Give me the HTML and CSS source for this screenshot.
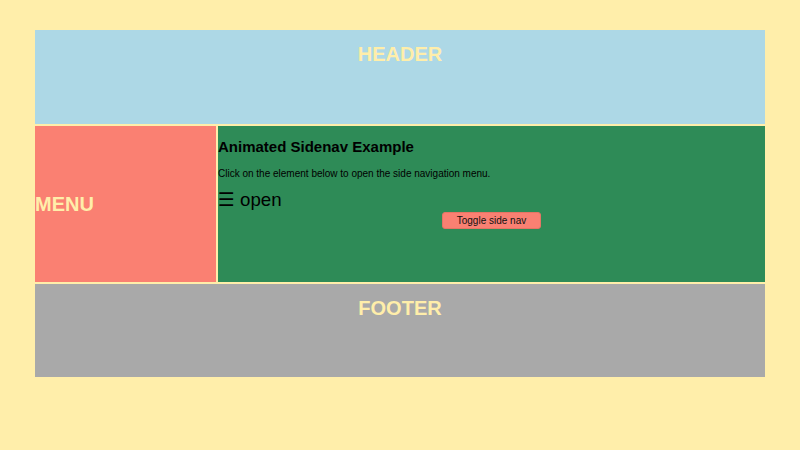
FILE: index.html
```html
<!DOCTYPE html>
<html>
<head>
<meta charset="utf-8">
<link rel="stylesheet" href="styles.css">
</head>
<body>
<div class="layout">
  <header class="header"><h1 class="title">HEADER</h1></header>
  <nav class="menu"><h1 class="title">MENU</h1></nav>
  <main class="main">
    <h2 class="heading">Animated Sidenav Example</h2>
    <p class="text">Click on the element below to open the side navigation menu.</p>
    <div class="opener"><span class="burger">☰</span> open</div>
    <div class="actions"><button class="toggle">Toggle side nav</button></div>
  </main>
  <footer class="footer"><h1 class="title">FOOTER</h1></footer>
</div>
</body>
</html>
```

FILE: styles.css
```css
html, body {
  margin: 0;
  padding: 0;
}
body {
  background: #ffeeaa;
  font-family: "Liberation Sans", Arial, sans-serif;
  color: #000;
}
.layout {
  margin: 30px 35px 0;
  display: grid;
  grid-template-columns: 181px 1fr;
  grid-template-rows: 94px 156px 93px;
  gap: 2px;
}
.title {
  font-size: 20px;
  font-weight: bold;
  margin: 0.67em 0;
  color: #ffeeaa;
}
.header {
  grid-column: 1 / span 2;
  background: #add8e6;
  text-align: center;
}
.footer {
  grid-column: 1 / span 2;
  background: #a9a9a9;
  text-align: center;
}
.menu {
  background: #fa8072;
  display: flex;
  align-items: center;
}
.menu .title {
  margin: 0;
}
.main {
  background: #2e8b57;
  display: flow-root;
}
.heading {
  font-size: 15px;
  font-weight: bold;
  margin: 0.83em 0;
}
.text {
  font-size: 10px;
  margin: 1em 0;
}
.opener {
  font-size: 18.72px;
  line-height: 20px;
  padding-top: 1px;
}
.burger {
  font-family: "DejaVu Sans", sans-serif;
}
.actions {
  text-align: center;
}
.toggle {
  font-family: "Liberation Sans", Arial, sans-serif;
  font-size: 10px;
  background: #fa8072;
  color: #111;
  border: 1px solid #e57565;
  border-radius: 3px;
  padding: 2px 14px;
  margin: 0;
}
```
